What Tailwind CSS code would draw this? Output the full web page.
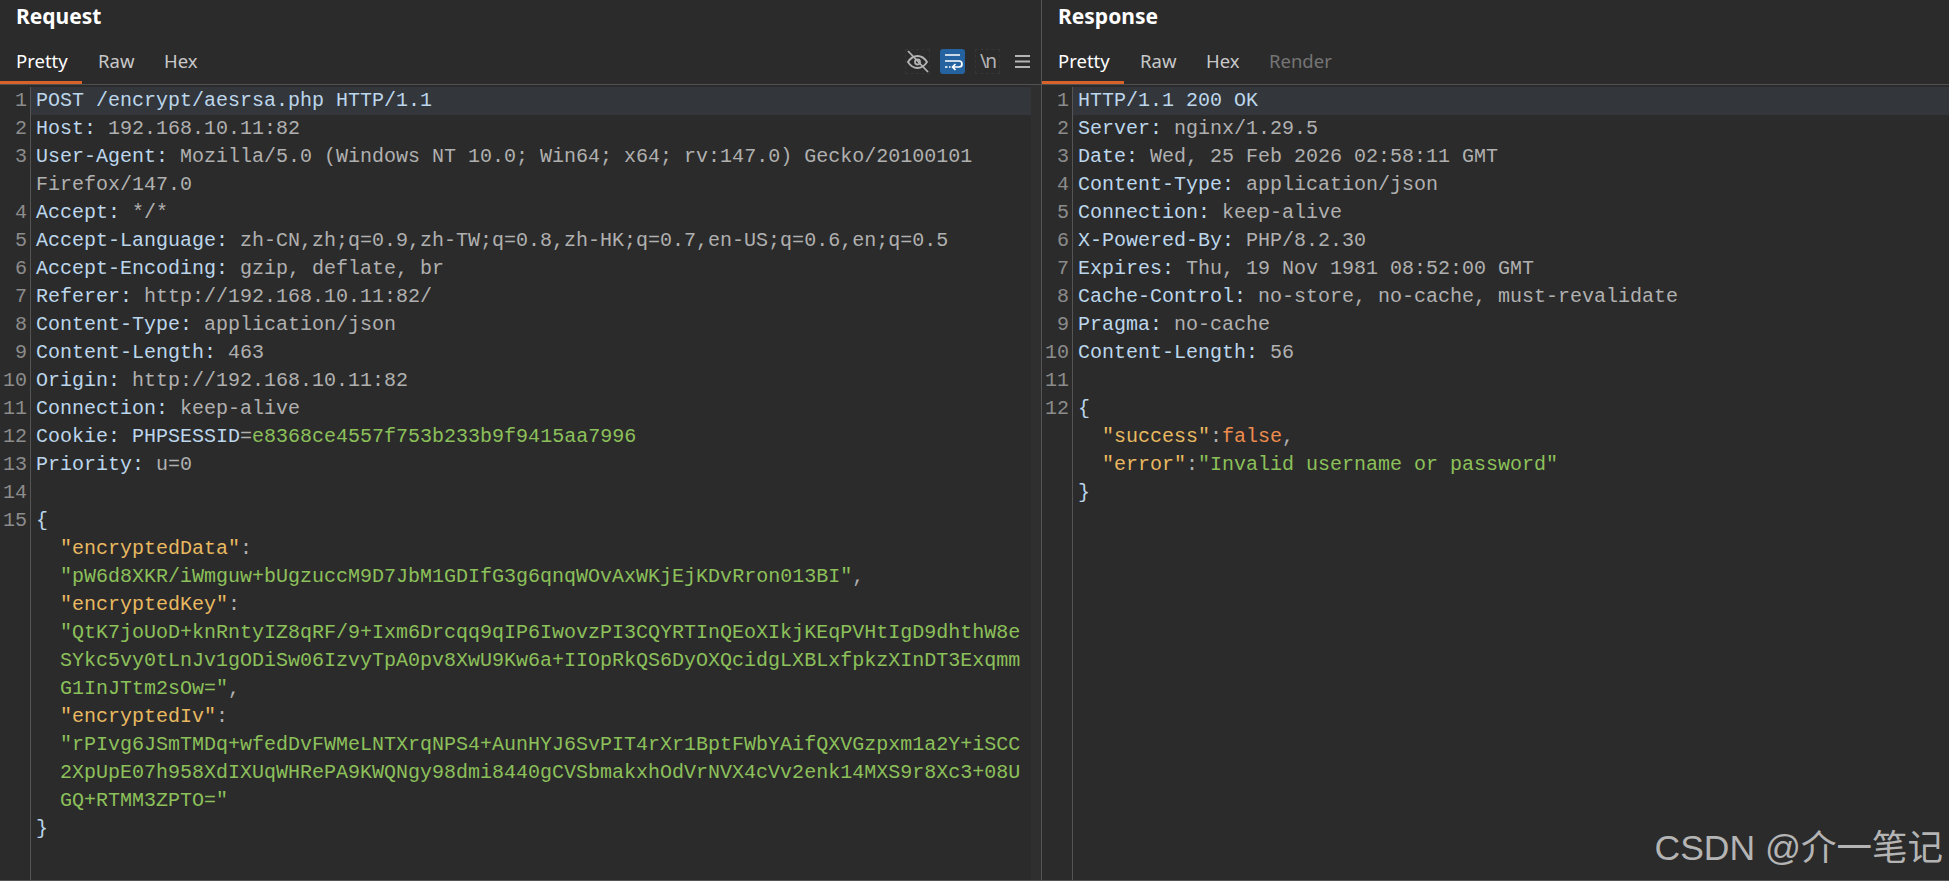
<!DOCTYPE html>
<html lang="en">

<head>
    <meta charset="UTF-8">
    <title>Burp Request / Response</title>
    <script src="https://cdn.jsdelivr.net/npm/@tailwindcss/browser@4"></script>
</head>

<body class="h-screen overflow-hidden bg-[#2b2b2b]">
    <div class="relative flex h-[881px] w-[1949px] border-b border-[#555555]">

        <!-- request pane -->
        <section class="flex h-full w-[1041px] flex-col">
            <h2 class="h-[36px] pl-[16px] pt-[1px] font-['Noto_Sans'] text-[21px] leading-[30px] font-bold text-white">Request</h2>
            <div class="flex h-[49px] items-start border-b border-[#505050] font-['Noto_Sans'] text-[18.500px] leading-[28px]">
                <div class="h-[48px] w-[82px] border-b-[3px] border-[#d9622b] pl-[16px] pt-[11px] text-white">Pretty</div>
                <div class="w-[66px] pl-[16px] pt-[11px] text-[#c8c8c8]">Raw</div>
                <div class="w-[79px] pl-[16px] pt-[11px] text-[#c8c8c8]">Hex</div>
                <div class="ml-auto flex gap-[10px] pr-[6px] pt-[13px]">
                    <div class="flex h-[25px] w-[25px] items-center justify-center border border-dashed border-[#363636]">
                        <svg class="h-[23px] w-[23px]" viewBox="0 0 23 23" fill="none" stroke="#b4b4b4" stroke-width="1.800">
                            <path d="M2 12c2.500-4 5.500-6 9.500-6s7 2 9.500 6c-2.500 4-5.500 6-9.500 6s-7-2-9.500-6z" />
                            <circle cx="11.500" cy="12" r="2.500" />
                            <path d="M2 1l20 21" />
                        </svg>
                    </div>
                    <div class="flex h-[25px] w-[25px] items-center justify-center rounded-[3px] bg-[#2563a0]">
                        <svg class="h-[25px] w-[25px]" viewBox="0 0 25 25" fill="none" stroke="#ffffff" stroke-width="1.700">
                            <path d="M5 6h15M5 12h14a3 3 0 0 1 0 6h-6M15.500 15l-3 3 3 3M5 18h2.500M9 18h1.500" />
                        </svg>
                    </div>
                    <div class="flex h-[25px] w-[25px] items-center justify-center border border-dashed border-[#363636] font-['Noto_Sans'] text-[19px] leading-none tracking-[-2px] text-[#b4b4b4]">\n</div>
                    <div class="flex h-[25px] w-[25px] items-center justify-center">
                        <svg class="h-[13px] w-[15px]" viewBox="0 0 15 13" fill="none" stroke="#b4b4b4" stroke-width="1.800">
                            <path d="M0 1h15M0 6.500h15M0 12h15" />
                        </svg>
                    </div>
                </div>
            </div>
            <div class="flex min-h-0 flex-1">
                <div class="flex w-[1031px] flex-col pt-[2px] font-['Liberation_Mono'] text-[20px] leading-[28px] whitespace-pre text-[#b0b0b0]">
                    <div class="flex bg-[#33373b]"><span class="w-[31px] border-r border-[#555555] bg-[#2b2b2b] pr-[3px] text-right text-[#8c8c8c]">1</span><span class="pl-[5px] text-[#bcd6ec]">POST /encrypt/aesrsa.php HTTP/1.1</span></div>
                    <div class="flex"><span class="w-[31px] border-r border-[#555555] pr-[3px] text-right text-[#8c8c8c]">2</span><span class="pl-[5px]"><span class="text-[#bcd6ec]">Host:</span> 192.168.10.11:82</span></div>
                    <div class="flex"><span class="w-[31px] border-r border-[#555555] pr-[3px] text-right text-[#8c8c8c]">3</span><span class="pl-[5px]"><span class="text-[#bcd6ec]">User-Agent:</span> Mozilla/5.0 (Windows NT 10.0; Win64; x64; rv:147.0) Gecko/20100101</span></div>
                    <div class="flex"><span class="w-[31px] border-r border-[#555555] pr-[3px] text-right text-[#8c8c8c]"></span><span class="pl-[5px]">Firefox/147.0</span></div>
                    <div class="flex"><span class="w-[31px] border-r border-[#555555] pr-[3px] text-right text-[#8c8c8c]">4</span><span class="pl-[5px]"><span class="text-[#bcd6ec]">Accept:</span> */*</span></div>
                    <div class="flex"><span class="w-[31px] border-r border-[#555555] pr-[3px] text-right text-[#8c8c8c]">5</span><span class="pl-[5px]"><span class="text-[#bcd6ec]">Accept-Language:</span> zh-CN,zh;q=0.9,zh-TW;q=0.8,zh-HK;q=0.7,en-US;q=0.6,en;q=0.5</span></div>
                    <div class="flex"><span class="w-[31px] border-r border-[#555555] pr-[3px] text-right text-[#8c8c8c]">6</span><span class="pl-[5px]"><span class="text-[#bcd6ec]">Accept-Encoding:</span> gzip, deflate, br</span></div>
                    <div class="flex"><span class="w-[31px] border-r border-[#555555] pr-[3px] text-right text-[#8c8c8c]">7</span><span class="pl-[5px]"><span class="text-[#bcd6ec]">Referer:</span> http://192.168.10.11:82/</span></div>
                    <div class="flex"><span class="w-[31px] border-r border-[#555555] pr-[3px] text-right text-[#8c8c8c]">8</span><span class="pl-[5px]"><span class="text-[#bcd6ec]">Content-Type:</span> application/json</span></div>
                    <div class="flex"><span class="w-[31px] border-r border-[#555555] pr-[3px] text-right text-[#8c8c8c]">9</span><span class="pl-[5px]"><span class="text-[#bcd6ec]">Content-Length:</span> 463</span></div>
                    <div class="flex"><span class="w-[31px] border-r border-[#555555] pr-[3px] text-right text-[#8c8c8c]">10</span><span class="pl-[5px]"><span class="text-[#bcd6ec]">Origin:</span> http://192.168.10.11:82</span></div>
                    <div class="flex"><span class="w-[31px] border-r border-[#555555] pr-[3px] text-right text-[#8c8c8c]">11</span><span class="pl-[5px]"><span class="text-[#bcd6ec]">Connection:</span> keep-alive</span></div>
                    <div class="flex"><span class="w-[31px] border-r border-[#555555] pr-[3px] text-right text-[#8c8c8c]">12</span><span class="pl-[5px]"><span class="text-[#bcd6ec]">Cookie:</span> <span class="text-[#bcd6ec]">PHPSESSID</span>=<span class="text-[#8cc05a]">e8368ce4557f753b233b9f9415aa7996</span></span></div>
                    <div class="flex"><span class="w-[31px] border-r border-[#555555] pr-[3px] text-right text-[#8c8c8c]">13</span><span class="pl-[5px]"><span class="text-[#bcd6ec]">Priority:</span> u=0</span></div>
                    <div class="flex"><span class="w-[31px] border-r border-[#555555] pr-[3px] text-right text-[#8c8c8c]">14</span><span class="pl-[5px]"> </span></div>
                    <div class="flex"><span class="w-[31px] border-r border-[#555555] pr-[3px] text-right text-[#8c8c8c]">15</span><span class="pl-[5px] text-[#bcd6ec]">{</span></div>
                    <div class="flex"><span class="w-[31px] border-r border-[#555555]"></span><span class="pl-[5px]">  <span class="text-[#e8b960]">"encryptedData"</span>:</span></div>
                    <div class="flex"><span class="w-[31px] border-r border-[#555555]"></span><span class="pl-[5px]">  <span class="text-[#8cc05a]">"pW6d8XKR/iWmguw+bUgzuccM9D7JbM1GDIfG3g6qnqWOvAxWKjEjKDvRron013BI"</span>,</span></div>
                    <div class="flex"><span class="w-[31px] border-r border-[#555555]"></span><span class="pl-[5px]">  <span class="text-[#e8b960]">"encryptedKey"</span>:</span></div>
                    <div class="flex"><span class="w-[31px] border-r border-[#555555]"></span><span class="pl-[5px] text-[#8cc05a]">  "QtK7joUoD+knRntyIZ8qRF/9+Ixm6Drcqq9qIP6IwovzPI3CQYRTInQEoXIkjKEqPVHtIgD9dhthW8e</span></div>
                    <div class="flex"><span class="w-[31px] border-r border-[#555555]"></span><span class="pl-[5px] text-[#8cc05a]">  SYkc5vy0tLnJv1gODiSw06IzvyTpA0pv8XwU9Kw6a+IIOpRkQS6DyOXQcidgLXBLxfpkzXInDT3Exqmm</span></div>
                    <div class="flex"><span class="w-[31px] border-r border-[#555555]"></span><span class="pl-[5px]">  <span class="text-[#8cc05a]">G1InJTtm2sOw="</span>,</span></div>
                    <div class="flex"><span class="w-[31px] border-r border-[#555555]"></span><span class="pl-[5px]">  <span class="text-[#e8b960]">"encryptedIv"</span>:</span></div>
                    <div class="flex"><span class="w-[31px] border-r border-[#555555]"></span><span class="pl-[5px] text-[#8cc05a]">  "rPIvg6JSmTMDq+wfedDvFWMeLNTXrqNPS4+AunHYJ6SvPIT4rXr1BptFWbYAifQXVGzpxm1a2Y+iSCC</span></div>
                    <div class="flex"><span class="w-[31px] border-r border-[#555555]"></span><span class="pl-[5px] text-[#8cc05a]">  2XpUpE07h958XdIXUqWHRePA9KWQNgy98dmi8440gCVSbmakxhOdVrNVX4cVv2enk14MXS9r8Xc3+08U</span></div>
                    <div class="flex"><span class="w-[31px] border-r border-[#555555]"></span><span class="pl-[5px] text-[#8cc05a]">  GQ+RTMM3ZPTO="</span></div>
                    <div class="flex"><span class="w-[31px] border-r border-[#555555]"></span><span class="pl-[5px] text-[#bcd6ec]">}</span></div>
                    <div class="flex flex-1"><span class="w-[31px] border-r border-[#555555]"></span></div>
                </div>
                <div class="w-[10px] bg-[#2f2f2f]"></div>
            </div>
        </section>

        <div class="w-px bg-[#555555]"></div>

        <!-- response pane -->
        <section class="flex h-full flex-1 flex-col">
            <h2 class="h-[36px] pl-[16px] pt-[1px] font-['Noto_Sans'] text-[21px] leading-[30px] font-bold text-white">Response</h2>
            <div class="flex h-[49px] items-start border-b border-[#505050] font-['Noto_Sans'] text-[18.500px] leading-[28px]">
                <div class="h-[48px] w-[82px] border-b-[3px] border-[#d9622b] pl-[16px] pt-[11px] text-white">Pretty</div>
                <div class="w-[66px] pl-[16px] pt-[11px] text-[#c8c8c8]">Raw</div>
                <div class="w-[79px] pl-[16px] pt-[11px] text-[#c8c8c8]">Hex</div>
                <div class="pt-[11px] text-[#757575]">Render</div>
            </div>
            <div class="flex min-h-0 flex-1 flex-col pt-[2px] font-['Liberation_Mono'] text-[20px] leading-[28px] whitespace-pre text-[#b0b0b0]">
                <div class="flex bg-[#33373b]"><span class="w-[31px] border-r border-[#555555] bg-[#2b2b2b] pr-[3px] text-right text-[#8c8c8c]">1</span><span class="pl-[5px] text-[#bcd6ec]">HTTP/1.1 200 OK</span></div>
                <div class="flex"><span class="w-[31px] border-r border-[#555555] pr-[3px] text-right text-[#8c8c8c]">2</span><span class="pl-[5px]"><span class="text-[#bcd6ec]">Server:</span> nginx/1.29.5</span></div>
                <div class="flex"><span class="w-[31px] border-r border-[#555555] pr-[3px] text-right text-[#8c8c8c]">3</span><span class="pl-[5px]"><span class="text-[#bcd6ec]">Date:</span> Wed, 25 Feb 2026 02:58:11 GMT</span></div>
                <div class="flex"><span class="w-[31px] border-r border-[#555555] pr-[3px] text-right text-[#8c8c8c]">4</span><span class="pl-[5px]"><span class="text-[#bcd6ec]">Content-Type:</span> application/json</span></div>
                <div class="flex"><span class="w-[31px] border-r border-[#555555] pr-[3px] text-right text-[#8c8c8c]">5</span><span class="pl-[5px]"><span class="text-[#bcd6ec]">Connection:</span> keep-alive</span></div>
                <div class="flex"><span class="w-[31px] border-r border-[#555555] pr-[3px] text-right text-[#8c8c8c]">6</span><span class="pl-[5px]"><span class="text-[#bcd6ec]">X-Powered-By:</span> PHP/8.2.30</span></div>
                <div class="flex"><span class="w-[31px] border-r border-[#555555] pr-[3px] text-right text-[#8c8c8c]">7</span><span class="pl-[5px]"><span class="text-[#bcd6ec]">Expires:</span> Thu, 19 Nov 1981 08:52:00 GMT</span></div>
                <div class="flex"><span class="w-[31px] border-r border-[#555555] pr-[3px] text-right text-[#8c8c8c]">8</span><span class="pl-[5px]"><span class="text-[#bcd6ec]">Cache-Control:</span> no-store, no-cache, must-revalidate</span></div>
                <div class="flex"><span class="w-[31px] border-r border-[#555555] pr-[3px] text-right text-[#8c8c8c]">9</span><span class="pl-[5px]"><span class="text-[#bcd6ec]">Pragma:</span> no-cache</span></div>
                <div class="flex"><span class="w-[31px] border-r border-[#555555] pr-[3px] text-right text-[#8c8c8c]">10</span><span class="pl-[5px]"><span class="text-[#bcd6ec]">Content-Length:</span> 56</span></div>
                <div class="flex"><span class="w-[31px] border-r border-[#555555] pr-[3px] text-right text-[#8c8c8c]">11</span><span class="pl-[5px]"> </span></div>
                <div class="flex"><span class="w-[31px] border-r border-[#555555] pr-[3px] text-right text-[#8c8c8c]">12</span><span class="pl-[5px] text-[#bcd6ec]">{</span></div>
                <div class="flex"><span class="w-[31px] border-r border-[#555555]"></span><span class="pl-[5px]">  <span class="text-[#e8b960]">"success"</span>:<span class="text-[#ee8c4e]">false</span>,</span></div>
                <div class="flex"><span class="w-[31px] border-r border-[#555555]"></span><span class="pl-[5px]">  <span class="text-[#e8b960]">"error"</span>:<span class="text-[#8cc05a]">"Invalid username or password"</span></span></div>
                <div class="flex"><span class="w-[31px] border-r border-[#555555]"></span><span class="pl-[5px] text-[#bcd6ec]">}</span></div>
                <div class="flex flex-1"><span class="w-[31px] border-r border-[#555555]"></span></div>
            </div>
        </section>

        <!-- watermark over the pane -->
        <div class="absolute right-[6px] bottom-[10px] font-['Liberation_Sans','Noto_Sans_CJK_SC',sans-serif] text-[35.500px] leading-[44px] text-[#b4b4b4]">CSDN @介一笔记</div>
    </div>
</body>

</html>
